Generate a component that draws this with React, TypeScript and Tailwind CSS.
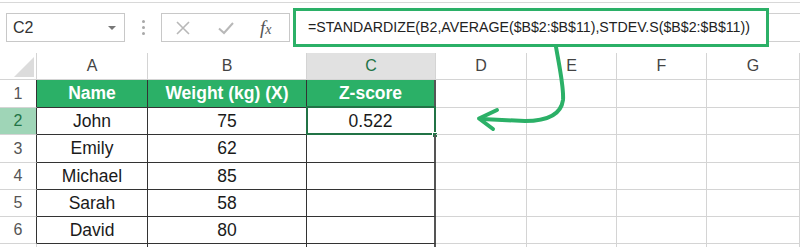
import React from "react";

const cols = [
  { key: "A", w: "w-[111px]" },
  { key: "B", w: "w-[159px]" },
  { key: "C", w: "w-[129px]" },
  { key: "D", w: "w-[91px]" },
  { key: "E", w: "w-[90px]" },
  { key: "F", w: "w-[90px]" },
  { key: "G", w: "flex-1" },
];

const rows = [
  { n: 1, h: "h-[28px]", cells: ["Name", "Weight (kg) (X)", "Z-score"] },
  { n: 2, h: "h-[27px]", cells: ["John", "75", "0.522"] },
  { n: 3, h: "h-[28px]", cells: ["Emily", "62", ""] },
  { n: 4, h: "h-[27px]", cells: ["Michael", "85", ""] },
  { n: 5, h: "h-[27px]", cells: ["Sarah", "58", ""] },
  { n: 6, h: "h-[27px]", cells: ["David", "80", ""] },
  { n: 7, h: "h-[27px]", cells: ["", "", ""] },
];

function Toolbar() {
  return (
    <div className="mt-[5px] flex h-[39px] items-center">
      <div className="ml-[6px] flex h-[29px] w-[119px] items-center justify-between border border-[#c8c8c8] pl-[6px] pr-[8px] text-[16px] text-[#333]">
        <span>C2</span>
        <span className="h-0 w-0 border-x-[4px] border-t-[4px] border-x-transparent border-t-[#777]" />
      </div>
      <div className="ml-[16px] flex w-[4px] flex-col items-center gap-[3px]">
        <span className="h-[3px] w-[3px] rounded-full bg-[#a8a8a8]" />
        <span className="h-[3px] w-[3px] rounded-full bg-[#a8a8a8]" />
        <span className="h-[3px] w-[3px] rounded-full bg-[#a8a8a8]" />
      </div>
      <div className="ml-[16px] flex h-[29px] w-[129px] items-center border border-[#c8c8c8]">
        <svg className="ml-[14px]" width="14" height="14" viewBox="0 0 14 14">
          <path d="M1 1 L13 13 M13 1 L1 13" stroke="#b8b8b8" strokeWidth="1.6" />
        </svg>
        <svg className="ml-[28px]" width="16" height="14" viewBox="0 0 16 14">
          <path d="M1 7.5 L6 12 L15 2" stroke="#b8b8b8" strokeWidth="2" fill="none" />
        </svg>
        <span className="ml-[26px] font-['Liberation_Serif'] text-[19px] italic leading-none text-[#555]">
          f<span className="text-[14px]">x</span>
        </span>
      </div>
      <div className="ml-[3px] flex h-[39px] w-[476px] items-center border-[3px] border-[#2bb067] pl-[12px] text-[14.2px] text-[#222]">
        =STANDARDIZE(B2,AVERAGE($B$2:$B$11),STDEV.S($B$2:$B$11))
      </div>
      <div className="h-[29px] flex-1 border-y border-[#d0d0d0]" />
    </div>
  );
}

function HeaderRow() {
  return (
    <div className="flex h-[27px]">
      <div className="flex w-[37px] items-end justify-end border-r border-b border-[#d4d4d4] pb-[2px] pr-[2px]">
        <svg width="20" height="20" viewBox="0 0 20 20">
          <path d="M20 0 L20 20 L0 20 Z" fill="#dcdcdc" />
        </svg>
      </div>
      {cols.map((c) => (
        <div
          key={c.key}
          className={`${c.w} flex items-center justify-center border-r border-b border-[#d4d4d4] text-[16px] ${
            c.key === "C" ? "bg-[#e1e1e1] text-[#217346]" : "text-[#444]"
          }`}
        >
          {c.key}
        </div>
      ))}
    </div>
  );
}

function DataRow({ r }: { r: (typeof rows)[number] }) {
  const inTable = r.n <= 6;
  const head = r.n === 1;
  const sel = r.n === 2;
  return (
    <div className={`flex ${r.h}`}>
      <div
        className={`w-[37px] flex items-center justify-center border-b border-[#d4d4d4] border-r text-[16px] ${
          inTable ? "border-r-[#333]" : ""
        } ${sel ? "bg-[#9fd5b7] text-[#217346]" : "text-[#555]"}`}
      >
        {inTable ? r.n : ""}
      </div>
      {cols.map((c, i) => {
        const tableCell = i < 3 && inTable;
        const text = i < 3 ? r.cells[i] : "";
        let cls = "border-r border-b border-[#d4d4d4]";
        if (tableCell) cls = "border-r border-b border-[#333]";
        if (i === 2 && inTable) cls = "border-r-2 border-b border-r-[#555] border-b-[#333]";
        if (i < 3 && r.n === 7) cls = "border-r border-b border-[#d4d4d4] border-r-[#333]";
        if (i === 2 && r.n === 7) cls = "border-r-2 border-b border-[#d4d4d4] border-r-[#555]";
        return (
          <div
            key={c.key}
            className={`${c.w} relative flex items-center justify-center ${cls} ${
              head && tableCell ? "bg-[#2bb067] font-bold text-white" : "text-[#1a1a1a]"
            } text-[17.5px]`}
          >
            {text}
            {sel && i === 2 && (
              <>
                <span className="pointer-events-none absolute -left-px -top-[2px] -right-[2px] -bottom-px border-2 border-[#217346]" />
                <span className="absolute -bottom-[4px] -right-[4px] h-[6px] w-[6px] border border-white bg-[#217346]" />
              </>
            )}
          </div>
        );
      })}
    </div>
  );
}

export default function App() {
  return (
    <div className="relative h-[247px] w-[800px] overflow-hidden bg-white font-['Liberation_Sans',sans-serif]">
      <div className="mt-[2px] h-px bg-[#d8d8d8]" />
      <Toolbar />
      <div className="h-[6px]" />
      <HeaderRow />
      {rows.map((r) => (
        <DataRow key={r.n} r={r} />
      ))}
      <svg className="pointer-events-none absolute left-0 top-0" width="800" height="247" viewBox="0 0 800 247">
        <path
          d="M556 47 C 560 70, 564 88, 563 100 C 561 115, 546 121, 525 121 L 482 119"
          stroke="#2bb067"
          strokeWidth="4"
          fill="none"
          strokeLinecap="round"
        />
        <path
          d="M497 110 L 479 118.5 L 493 129"
          stroke="#2bb067"
          strokeWidth="4"
          fill="none"
          strokeLinecap="round"
          strokeLinejoin="round"
        />
      </svg>
    </div>
  );
}
